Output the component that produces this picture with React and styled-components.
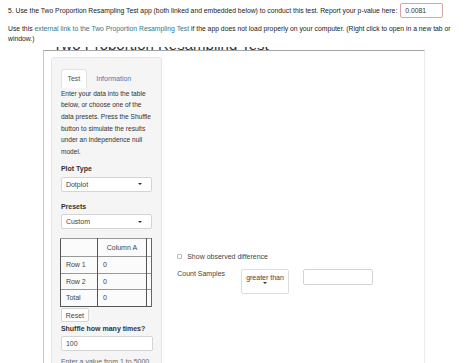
import React from 'react';
import styled, { createGlobalStyle } from 'styled-components';

const GlobalStyle = createGlobalStyle`
  html, body {
    margin: 0;
    padding: 0;
    background: #fff;
  }
  body {
    width: 474px;
    height: 363px;
    overflow: hidden;
    font-family: "Liberation Sans", Arial, sans-serif;
    color: #222;
  }
`;

const Page = styled.div`
  padding: 0 8px;
`;

const QuestionRow = styled.div`
  display: flex;
  align-items: center;
  margin-top: 3px;
  height: 15px;
  font-size: 6.8px;
  white-space: nowrap;
`;

const AnswerBox = styled.div`
  margin-left: 3px;
  width: 43px;
  height: 15px;
  box-sizing: border-box;
  border: 1px solid #d9a4a4;
  border-radius: 2px;
  padding-left: 4px;
  display: flex;
  align-items: center;
  font-size: 6.8px;
  color: #333;
`;

const Note = styled.p`
  margin: 5.5px 0 0;
  font-size: 6.8px;
  line-height: 10.3px;
`;

const Link = styled.a`
  color: #2e7a8a;
  text-decoration: none;
`;

const FrameArea = styled.div`
  margin-left: 35.3px;
  width: 381.7px;
`;

const TitleClip = styled.div`
  height: 3px;
  margin-top: 3px;
  overflow: hidden;
  padding-left: 9.7px;
`;

const Title = styled.div`
  font-size: 15px;
  line-height: 15px;
  margin-top: -10.3px;
  color: #333;
  white-space: nowrap;
`;

const Frame = styled.div`
  box-sizing: border-box;
  height: 320px;
  border-top: 1.6px solid #a6a6a6;
  border-left: 1.7px solid #c6c6c6;
  border-right: 1px solid #ececec;
  padding: 5.7px 0 0 6.6px;
  display: flex;
  align-items: flex-start;
  overflow: hidden;
`;

const Sidebar = styled.div`
  flex: 0 0 auto;
  width: 111.3px;
  box-sizing: border-box;
  background: #f5f5f5;
  border: 1px solid #e6e6e6;
  border-radius: 3px;
  padding: 11px 9px 20px;
  font-size: 7px;
  color: #333;
`;

const Tabs = styled.div`
  display: flex;
  height: 19px;
`;

const Tab = styled.div`
  display: flex;
  align-items: center;
  padding: 0 5.5px;
  margin-left: ${(p) => (p.$active ? 0 : 3)}px;
  border: 1px solid ${(p) => (p.$active ? '#e2e2e2' : 'transparent')};
  border-bottom: none;
  border-radius: 3px 3px 0 0;
  background: ${(p) => (p.$active ? '#fff' : 'transparent')};
  color: ${(p) => (p.$active ? '#555' : '#3a7bbf')};
`;

const Intro = styled.p`
  margin: 0 -2px 0 0;
  font-size: 6.6px;
  line-height: 11.67px;
`;

const Label = styled.div`
  font-weight: bold;
  line-height: 10px;
  margin-top: ${(p) => p.$top}px;
  margin-bottom: ${(p) => p.$bottom ?? 2.7}px;
  white-space: nowrap;
`;

const SelectBox = styled.div`
  box-sizing: border-box;
  height: 15px;
  background: #fff;
  border: 1px solid #d4d4d4;
  border-radius: 2px;
  display: flex;
  align-items: center;
  justify-content: space-between;
  padding: 0 9px 0 4px;
  color: #444;
`;

const Caret = styled.span`
  width: 0;
  height: 0;
  border-left: 2.2px solid transparent;
  border-right: 2.2px solid transparent;
  border-top: 2.4px solid #333;
`;

const TableClip = styled.div`
  width: 92px;
  margin: 9px 0 0 -1px;
  overflow: hidden;
  box-sizing: border-box;
  border-right: 1.2px solid #666;
`;

const Table = styled.table`
  border-collapse: collapse;
  table-layout: fixed;
  width: 140px;
  border-top: 1.5px solid #555;
  border-bottom: 1.3px solid #555;
  background: #fbfbfb;
`;

const Cell = styled.td`
  height: ${(p) => (p.$head ? 17 : 15.5)}px;
  padding: 0 0 0 ${(p) => (p.$center ? 0 : 5)}px;
  text-align: ${(p) => (p.$center ? 'center' : 'left')};
  border-left: 1.3px solid #555;
  border-right: 1.3px solid #555;
  border-top: 1px solid #999;
  color: #444;
  font-size: 7px;
  white-space: nowrap;
  overflow: hidden;
`;

const ResetButton = styled.div`
  box-sizing: border-box;
  width: 28px;
  height: 14.7px;
  margin-top: 1px;
  display: flex;
  align-items: center;
  justify-content: center;
  background: #fff;
  border: 1px solid #d4d4d4;
  border-radius: 2px;
  color: #444;
`;

const TextInput = styled.div`
  box-sizing: border-box;
  width: ${(p) => p.$width}px;
  height: ${(p) => p.$height}px;
  margin-top: ${(p) => p.$top ?? 0}px;
  margin-left: ${(p) => p.$left ?? 0}px;
  background: #fff;
  border: 1px solid #d4d4d4;
  border-radius: 2px;
  padding-left: 4px;
  display: flex;
  align-items: center;
  color: #444;
`;

const Help = styled.div`
  margin-top: 6.5px;
  line-height: 10px;
  color: #666;
  white-space: nowrap;
`;

const Main = styled.div`
  flex: 1;
  padding-left: 15px;
  font-size: 7px;
  color: #444;
`;

const PlotSpace = styled.div`
  height: 195px;
`;

const CheckRow = styled.div`
  display: flex;
  align-items: center;
  height: 10px;
  gap: 5px;
`;

const CheckBox = styled.span`
  width: 5px;
  height: 5px;
  box-sizing: border-box;
  border: 0.8px solid #bbb;
  border-radius: 1px;
  background: #fff;
`;

const CountRow = styled.div`
  display: flex;
  align-items: flex-start;
  margin-top: 7px;
`;

const CountLabel = styled.div`
  width: 63.7px;
  line-height: 10px;
`;

const CompareSelect = styled.div`
  box-sizing: border-box;
  width: 48.3px;
  height: 25px;
  border: 1px solid #ddd;
  border-radius: 2px;
  background: #fff;
  display: flex;
  flex-direction: column;
  align-items: center;
  padding-top: 4px;
  line-height: 8px;
  gap: 0.5px;
`;

const rows = [
  { name: 'Row 1', value: '0' },
  { name: 'Row 2', value: '0' },
  { name: 'Total', value: '0' },
];

export default function App() {
  return (
    <>
      <GlobalStyle />
      <Page>
        <QuestionRow>
          5. Use the Two Proportion Resampling Test app (both linked and embedded below) to conduct this test. Report your p-value here:
          <AnswerBox>0.0081</AnswerBox>
        </QuestionRow>
        <Note>
          Use this <Link href="#">external link to the Two Proportion Resampling Test</Link> if the app does not load properly on your computer. (Right click to open in a new tab or window.)
        </Note>
        <FrameArea>
          <TitleClip>
            <Title>Two Proportion Resampling Test</Title>
          </TitleClip>
          <Frame>
            <Sidebar>
              <Tabs>
                <Tab $active>Test</Tab>
                <Tab>Information</Tab>
              </Tabs>
              <Intro>
                Enter your data into the table below, or choose one of the data presets. Press the Shuffle button to simulate the results under an independence null model.
              </Intro>
              <Label $top={6}>Plot Type</Label>
              <SelectBox>
                Dotplot
                <Caret />
              </SelectBox>
              <Label $top={10}>Presets</Label>
              <SelectBox>
                Custom
                <Caret />
              </SelectBox>
              <TableClip>
                <Table>
                  <colgroup>
                    <col style={{ width: 37 }} />
                    <col style={{ width: 49 }} />
                    <col style={{ width: 54 }} />
                  </colgroup>
                  <tbody>
                    <tr>
                      <Cell $head />
                      <Cell $head $center>Column A</Cell>
                      <Cell $head $center>Column B</Cell>
                    </tr>
                    {rows.map((row) => (
                      <tr key={row.name}>
                        <Cell>{row.name}</Cell>
                        <Cell>{row.value}</Cell>
                        <Cell />
                      </tr>
                    ))}
                  </tbody>
                </Table>
              </TableClip>
              <ResetButton>Reset</ResetButton>
              <Label $top={2} $bottom={1.3}>Shuffle how many times?</Label>
              <TextInput $width={92} $height={15.3}>100</TextInput>
              <Help>Enter a value from 1 to 5000</Help>
            </Sidebar>
            <Main>
              <PlotSpace />
              <CheckRow>
                <CheckBox />
                Show observed difference
              </CheckRow>
              <CountRow>
                <CountLabel>Count Samples</CountLabel>
                <CompareSelect>
                  greater than
                  <Caret />
                </CompareSelect>
                <TextInput $width={70} $height={16} $left={14} />
              </CountRow>
            </Main>
          </Frame>
        </FrameArea>
      </Page>
    </>
  );
}
